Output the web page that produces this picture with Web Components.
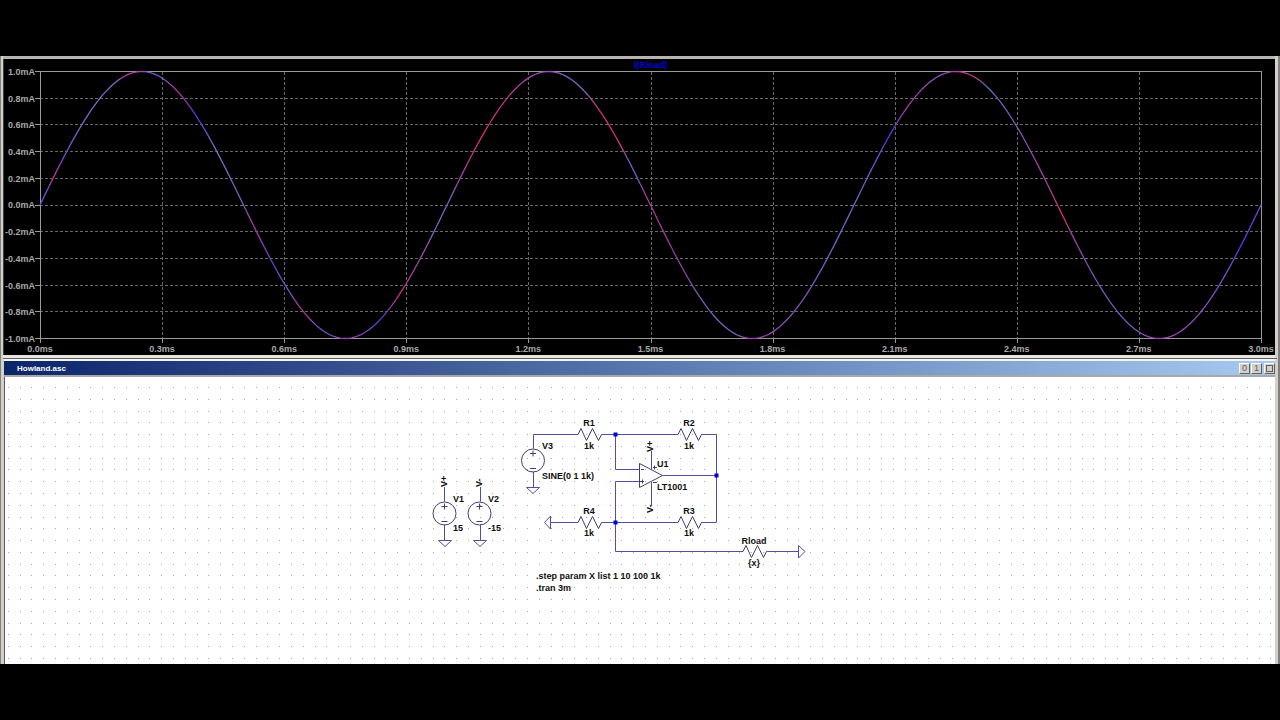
<!DOCTYPE html>
<html lang="en">
<head>
<meta charset="utf-8">
<title>Howland.asc</title>
<style>
  body {
    margin: 0;
    padding: 56px 0;
    min-height: 100vh;
    box-sizing: border-box;
    background: #000;
    font-family: "Liberation Sans", Arial, sans-serif;
    font-size: 9px;
    font-weight: bold;
  }
</style>
</head>
<body>
<sim-desktop>
  <wave-plot data-title="I(Rload)"></wave-plot>
  <sim-window>
    <span slot="title">Howland.asc</span>
    <schematic-sheet></schematic-sheet>
  </sim-window>
</sim-desktop>

<script>
class SimDesktop extends HTMLElement {
  constructor() {
    super();
    const shadow = this.attachShadow({ mode: 'open' });
    shadow.innerHTML = `
      <style>
        :host {
          display: block;
          background: #d4d0c8;
          border-left: 1px solid #808080;
          border-right: 2px solid #808080;
          padding: 0 1px 0 2px;
        }
      </style>
      <slot></slot>
    `;
  }
}

class WavePlot extends HTMLElement {
  constructor() {
    super();
    const shadow = this.attachShadow({ mode: 'open' });

    const yLabels = ['1.0mA', '0.8mA', '0.6mA', '0.4mA', '0.2mA', '0.0mA', '-0.2mA', '-0.4mA', '-0.6mA', '-0.8mA', '-1.0mA'];
    const xLabels = ['0.0ms', '0.3ms', '0.6ms', '0.9ms', '1.2ms', '1.5ms', '1.8ms', '2.1ms', '2.4ms', '2.7ms', '3.0ms'];
    const w = 1221;
    const h = 267;

    let dashes = '';
    let ticks = '';
    for (let i = 0; i <= 10; i++) {
      const x = Math.round(w * i / 10);
      const y = Math.round(h * i / 10);
      if (i > 0 && i < 10) {
        dashes += `M0 ${y}H${w}M${x} 0V${h}`;
      }
      ticks += `M-5 ${y}H0M${x} ${h}v4`;
    }

    // three periods of a 1 kHz sine
    let curve = '';
    for (let x = 0; x <= w; x += 3) {
      const y = h / 2 - h / 2 * Math.sin(x / w * 6 * Math.PI);
      curve += (x ? 'L' : 'M') + x + ' ' + y.toFixed(2);
    }

    // the stepped traces overlap, so the visible colour changes along the curve
    const stops = [
      [0, '#6a50e0'], [8, '#6a50e0'], [12, '#c83080'], [22, '#8040d0'], [40, '#7068c8'], [70, '#7070c8'],
      [90, '#c030a0'], [115, '#6060d0'], [138, '#b03098'], [158, '#5038e0'], [175, '#7078c8'],
      [200, '#7060c0'], [215, '#a83aa0'], [235, '#5c48d8'], [250, '#6a60d0'], [262, '#c03088'],
      [280, '#6858c8'], [310, '#a040b0'], [340, '#5040d8'], [360, '#c03080'], [385, '#9050b0'],
      [400, '#6870c8'], [425, '#a040a0'], [440, '#e03068'], [465, '#b83088'], [500, '#a048b8'],
      [540, '#6870c8'], [560, '#d03080'], [580, '#d83080'], [592, '#5868d0'], [608, '#b03890'],
      [640, '#9040a0'], [680, '#6870c0'], [710, '#a040b0'], [760, '#8050b8'], [800, '#6070c8'],
      [835, '#6c58c8'], [848, '#5038e8'], [865, '#a03c98'], [895, '#8850c0'], [920, '#b040a8'],
      [930, '#e03080'], [950, '#5c70c8'], [980, '#8850b8'], [1005, '#a040a0'], [1022, '#d83078'],
      [1035, '#9048a8'], [1080, '#6860c0'], [1120, '#a040b0'], [1160, '#8850b8'], [1190, '#7050c8'],
      [1200, '#5038e8'], [1221, '#7048c8']
    ];

    shadow.innerHTML = `
      <style>
        :host {
          display: block;
          color: #a8a8a8;
          border-top: 3px solid #b8b4b0;
          border-bottom: 3px solid #e8e6e0;
          margin-right: 2px;
        }
        .pane {
          display: grid;
          grid-template-columns: 36px 1fr;
          grid-template-rows: 12px 268px 16px;
          padding-right: 14px;
          background: #000;
          border-left: 1px solid #404040;
        }
        h2 {
          grid-column: 2;
          margin: 0;
          font-size: 9px;
          line-height: 12px;
          text-align: center;
          color: #0000d8;
        }
        .y {
          display: flex;
          flex-direction: column;
          justify-content: space-between;
          padding-right: 5px;
          text-align: right;
        }
        .y span {
          height: 1px;
          line-height: 2px;
        }
        .x {
          grid-column: 2;
          display: flex;
          justify-content: space-between;
          padding-top: 5px;
          line-height: 11px;
        }
        .x span {
          display: flex;
          justify-content: center;
          width: 0;
        }
        svg {
          display: block;
          width: 100%;
          height: 267px;
          overflow: visible;
        }
        path {
          fill: none;
          vector-effect: non-scaling-stroke;
        }
      </style>
      <div class="pane">
        <h2></h2>
        <div class="y">${yLabels.map(t => `<span>${t}</span>`).join('')}</div>
        <svg viewBox="0 0 ${w} ${h}" preserveAspectRatio="none">
          <defs>
            <linearGradient id="trace" gradientUnits="userSpaceOnUse" x1="0" y1="0" x2="${w}" y2="0">
              ${stops.map(s => `<stop offset="${s[0] / w}" stop-color="${s[1]}"/>`).join('')}
            </linearGradient>
          </defs>
          <g transform="translate(0 .5)">
            <path d="${dashes}" stroke="#686868" stroke-dasharray="3 2" shape-rendering="crispEdges"/>
            <path d="M0 0H${w}V${h}H0Z${ticks}" stroke="#9a9a9a" shape-rendering="crispEdges"/>
            <path d="${curve}" stroke="url(#trace)" stroke-width="1.3"/>
          </g>
        </svg>
        <div class="x">${xLabels.map(t => `<span>${t}</span>`).join('')}</div>
      </div>
    `;
    shadow.querySelector('h2').textContent = this.getAttribute('data-title') || '';
  }
}

class SimWindow extends HTMLElement {
  constructor() {
    super();
    const shadow = this.attachShadow({ mode: 'open' });
    shadow.innerHTML = `
      <style>
        :host {
          display: block;
          border-top: 1px solid #606060;
          padding-right: 1px;
        }
        .frame {
          border-top: 2px solid #f4f4f0;
          border-left: 1px solid #d4d0c8;
          border-right: 1px solid #d4d0c8;
        }
        .bar {
          display: flex;
          align-items: center;
          height: 14px;
          padding-left: 13px;
          background: linear-gradient(to right, #0a246a, #a6caf0);
          border-bottom: 2px solid #a8a8a8;
          color: #fff;
          font-size: 8px;
        }
        .bar slot {
          display: block;
          flex: 1;
        }
        .buttons {
          display: flex;
          gap: 1px;
        }
        button {
          display: flex;
          align-items: center;
          justify-content: center;
          width: 11px;
          height: 11px;
          padding: 0;
          border: 1px solid;
          border-color: #fff #606060 #606060 #fff;
          background: #d4d0c8;
          color: #606060;
          font-family: inherit;
          font-size: 9px;
          line-height: 9px;
        }
        button:last-child {
          margin-left: 1px;
        }
        i {
          width: 5px;
          height: 5px;
          border: 1px solid #606060;
        }
      </style>
      <div class="frame">
        <div class="bar">
          <slot name="title"></slot>
          <div class="buttons">
            <button>0</button>
            <button>1</button>
            <button aria-label="Close"><i></i></button>
          </div>
        </div>
        <slot></slot>
      </div>
    `;
  }
}

class SchematicSheet extends HTMLElement {
  constructor() {
    super();
    const shadow = this.attachShadow({ mode: 'open' });

    // snap grid
    let dots = '';
    for (let r = 0; r < 24; r++) {
      for (let c = 0; c < 108; c++) {
        dots += `M${Math.round(7.7 + c * 11.8)} ${Math.round(387 + r * 11.78)}h1v1h-1z`;
      }
    }

    const resistor = (x, y) => `<path d="M${x} ${y}h.5l3 -6 5.5 12 6 -12 6 12 3 -6h.5"/>`;
    const source = (x, y) => `
      <circle cx="${x}" cy="${y}" r="11.5"/>
      <path d="M${x - 3} ${y - 7}h6M${x} ${y - 10}v6M${x - 3} ${y + 8}h6"/>`;
    const ground = (x, y) => `<path d="M${x - 6.5} ${y}h13l-6.5 6z"/>`;
    const node = (x, y) => `<rect x="${x - 2}" y="${y - 2}" width="4" height="4"/>`;
    const up = (x, y, t) => `<text transform="translate(${x} ${y}) rotate(-90)">${t}</text>`;

    shadow.innerHTML = `
      <style>
        :host {
          display: block;
          background: #fff;
          border-left: 1px solid #585858;
        }
        svg {
          display: block;
          width: 100%;
        }
        .dots { fill: #a4a4a4; shape-rendering: crispEdges; }
        .wires { fill: none; stroke: #5050a0; }
        .parts { fill: none; stroke: #404070; }
        .nodes { fill: #0000d0; }
        text { fill: #101010; font-size: 9px; }
        .mid { text-anchor: middle; }
      </style>
      <svg viewBox="5 377 1270 287">
        <path class="dots" d="${dots}"/>
        <g class="wires">
          <path d="M533.5 448.5V434.5H578M602 434.5H678M702 434.5H716.5V522.5H702M678 522.5H602M578 522.5H550.5"/>
          <path d="M615.5 434.5V469.5H639.5M639.5 481.5H615.5V551.5H743M767 551.5H798.5M662.5 475.5H716.5"/>
          <path d="M533.5 472V487.5M444.5 487V501.5M444.5 524.5V540.5M480.5 487V501.5M480.5 524.5V540.5"/>
          <path d="M651.5 451V469.5M651.5 482V506"/>
          ${ground(533, 487.5)}
          ${ground(445, 540.5)}
          ${ground(480, 540.5)}
          <path d="M550.5 516v13l-6 -6.5z"/>
          <path d="M798.5 545.5v12.5l6.5 -6.5z"/>
        </g>
        <g class="parts">
          ${resistor(577.5, 434.5)}
          ${resistor(677.5, 434.5)}
          ${resistor(577.5, 522.5)}
          ${resistor(677.5, 522.5)}
          ${resistor(742.5, 551.5)}
          ${source(533, 460.5)}
          ${source(444.5, 513.5)}
          ${source(479.5, 513.5)}
          <path d="M639.5 463.5v24l23 -12zM641 469.5h3M640 481.5h4M642.5 479.5v4M653 467.5h4M654.5 465.5v4M653 482.5h4"/>
        </g>
        <g class="nodes">
          ${node(615.5, 434.5)}
          ${node(615.5, 522.5)}
          ${node(716.5, 475.5)}
        </g>
        <g class="mid">
          <text x="589" y="426">R1</text>
          <text x="589" y="449">1k</text>
          <text x="689" y="426">R2</text>
          <text x="689" y="449">1k</text>
          <text x="589" y="514">R4</text>
          <text x="589" y="536">1k</text>
          <text x="689" y="514">R3</text>
          <text x="689" y="536">1k</text>
          <text x="754" y="544">Rload</text>
          <text x="754" y="566">{x}</text>
        </g>
        <text x="542" y="449">V3</text>
        <text x="542" y="479">SINE(0 1 1k)</text>
        <text x="453" y="502">V1</text>
        <text x="453" y="531">15</text>
        <text x="488" y="502">V2</text>
        <text x="488" y="531">-15</text>
        <text x="657" y="467">U1</text>
        <text x="657" y="490">LT1001</text>
        ${up(447, 487, 'V+')}
        ${up(482, 487, 'V-')}
        ${up(653, 452, 'V+')}
        ${up(653, 513, 'V-')}
        <text x="536" y="579">.step param X list 1 10 100 1k</text>
        <text x="536" y="591">.tran 3m</text>
      </svg>
    `;
  }
}

customElements.define('sim-desktop', SimDesktop);
customElements.define('wave-plot', WavePlot);
customElements.define('sim-window', SimWindow);
customElements.define('schematic-sheet', SchematicSheet);
</script>
</body>
</html>
